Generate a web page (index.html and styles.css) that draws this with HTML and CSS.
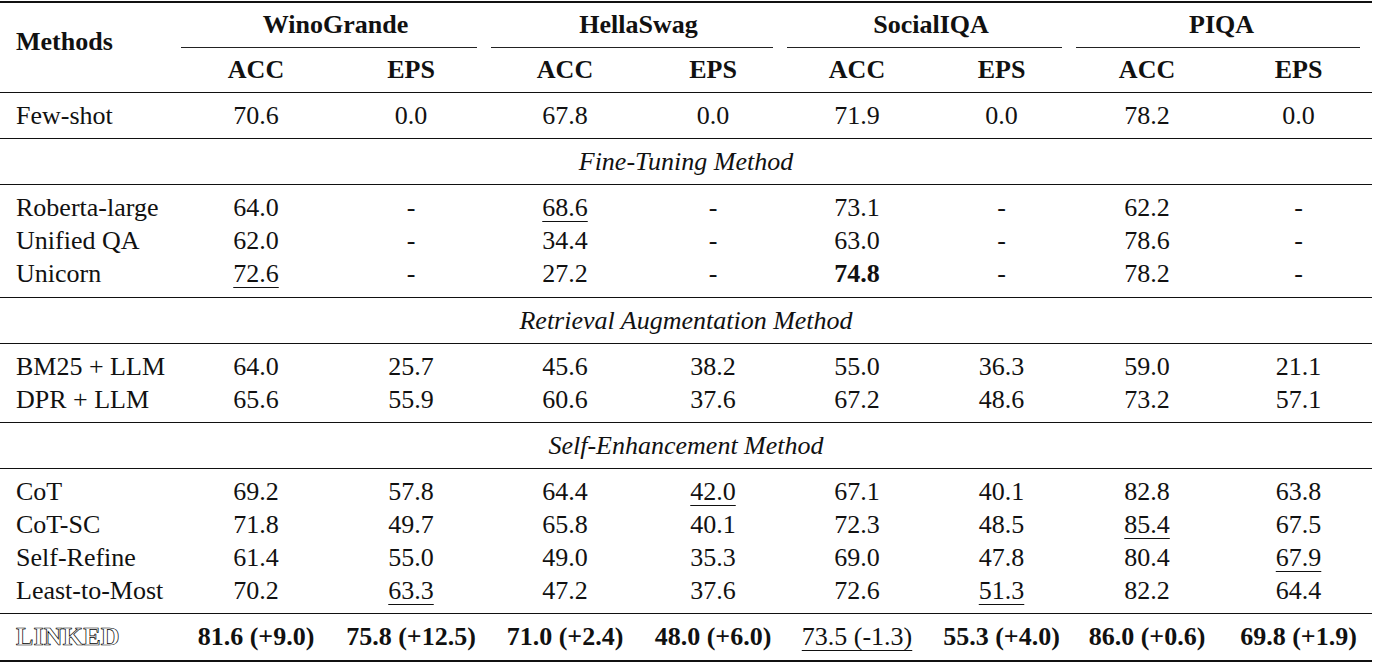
FILE: index.html
```html
<!DOCTYPE html>
<html lang="en">
<head>
<meta charset="utf-8">
<title>Results</title>
<link rel="stylesheet" href="styles.css">
</head>
<body>
<table class="results">
  <colgroup>
    <col class="c-method"><col class="c1"><col class="c2"><col class="c3"><col class="c4"><col class="c5"><col class="c6"><col class="c7"><col class="c8">
  </colgroup>
  <thead>
    <tr class="hrow1">
      <th rowspan="2" class="methods">Methods</th>
      <th colspan="2"><div class="grp">WinoGrande</div></th>
      <th colspan="2"><div class="grp">HellaSwag</div></th>
      <th colspan="2"><div class="grp">SocialIQA</div></th>
      <th colspan="2"><div class="grp grp-last">PIQA</div></th>
    </tr>
    <tr class="hrow2">
      <th>ACC</th><th>EPS</th><th>ACC</th><th>EPS</th><th>ACC</th><th>EPS</th><th>ACC</th><th>EPS</th>
    </tr>
  </thead>
  <tbody>
    <tr><td>Few-shot</td><td>70.6</td><td>0.0</td><td>67.8</td><td>0.0</td><td>71.9</td><td>0.0</td><td>78.2</td><td>0.0</td></tr>
  </tbody>
  <tbody>
    <tr><td colspan="9" class="label">Fine-Tuning Method</td></tr>
  </tbody>
  <tbody>
    <tr><td>Roberta-large</td><td>64.0</td><td>-</td><td><span class="u">68.6</span></td><td>-</td><td>73.1</td><td>-</td><td>62.2</td><td>-</td></tr>
    <tr><td>Unified QA</td><td>62.0</td><td>-</td><td>34.4</td><td>-</td><td>63.0</td><td>-</td><td>78.6</td><td>-</td></tr>
    <tr><td>Unicorn</td><td><span class="u">72.6</span></td><td>-</td><td>27.2</td><td>-</td><td><b>74.8</b></td><td>-</td><td>78.2</td><td>-</td></tr>
  </tbody>
  <tbody>
    <tr><td colspan="9" class="label">Retrieval Augmentation Method</td></tr>
  </tbody>
  <tbody>
    <tr><td>BM25 + LLM</td><td>64.0</td><td>25.7</td><td>45.6</td><td>38.2</td><td>55.0</td><td>36.3</td><td>59.0</td><td>21.1</td></tr>
    <tr><td>DPR + LLM</td><td>65.6</td><td>55.9</td><td>60.6</td><td>37.6</td><td>67.2</td><td>48.6</td><td>73.2</td><td>57.1</td></tr>
  </tbody>
  <tbody>
    <tr><td colspan="9" class="label">Self-Enhancement Method</td></tr>
  </tbody>
  <tbody>
    <tr><td>CoT</td><td>69.2</td><td>57.8</td><td>64.4</td><td><span class="u">42.0</span></td><td>67.1</td><td>40.1</td><td>82.8</td><td>63.8</td></tr>
    <tr><td>CoT-SC</td><td>71.8</td><td>49.7</td><td>65.8</td><td>40.1</td><td>72.3</td><td>48.5</td><td><span class="u">85.4</span></td><td>67.5</td></tr>
    <tr><td>Self-Refine</td><td>61.4</td><td>55.0</td><td>49.0</td><td>35.3</td><td>69.0</td><td>47.8</td><td>80.4</td><td><span class="u">67.9</span></td></tr>
    <tr><td>Least-to-Most</td><td>70.2</td><td><span class="u">63.3</span></td><td>47.2</td><td>37.6</td><td>72.6</td><td><span class="u">51.3</span></td><td>82.2</td><td>64.4</td></tr>
  </tbody>
  <tbody class="final">
    <tr><td><span class="linked">LINKED</span></td><td><b>81.6 (+9.0)</b></td><td><b>75.8 (+12.5)</b></td><td><b>71.0 (+2.4)</b></td><td><b>48.0 (+6.0)</b></td><td><span class="u">73.5 (-1.3)</span></td><td><b>55.3 (+4.0)</b></td><td><b>86.0 (+0.6)</b></td><td><b>69.8 (+1.9)</b></td></tr>
  </tbody>
</table>
</body>
</html>
```

FILE: styles.css
```css
html, body {
  margin: 0;
  padding: 0;
  background: #ffffff;
}

body {
  font-family: "Liberation Serif", "Times New Roman", serif;
  font-size: 26px;
  color: #111;
}

.results {
  margin-top: 1px;
  width: 1372px;
  table-layout: fixed;
  border-collapse: separate;
  border-spacing: 0;
  border-top: 2px solid #111;
  border-bottom: 2px solid #111;
}

.c-method { width: 174px; }
.c1 { width: 164px; }
.c2 { width: 146px; }
.c3 { width: 162px; }
.c4 { width: 134px; }
.c5 { width: 154px; }
.c6 { width: 135px; }
.c7 { width: 156px; }
.c8 { width: 147px; }

th, td {
  padding: 0;
  line-height: 33px;
  text-align: center;
  white-space: nowrap;
  vertical-align: top;
}

th {
  font-weight: bold;
}

.hrow1 th {
  padding-top: 5px;
}

.grp {
  padding-left: 13px;
  padding-bottom: 6px;
  margin: 0 7px;
  border-bottom: 1px solid #222;
}

.grp-last {
  padding-left: 7px;
  margin-right: 12px;
}

.hrow1 th.methods {
  text-align: left;
  padding-left: 16px;
  padding-top: 22px;
  border-bottom: 1px solid #111;
}

.hrow2 th {
  padding-top: 5px;
  padding-bottom: 6px;
  border-bottom: 1px solid #111;
}

td:first-child {
  text-align: left;
  padding-left: 16px;
}

td.label {
  text-align: center;
  padding-left: 0;
  font-style: italic;
}

tbody tr:first-child td {
  padding-top: 6px;
}

tbody tr:last-child td {
  padding-bottom: 6.2px;
  border-bottom: 1px solid #111;
}

tbody.final tr:last-child td {
  border-bottom: none;
}

.u {
  text-decoration: underline;
  text-decoration-thickness: 1px;
  text-underline-offset: 5px;
}

b {
  font-weight: bold;
}

.linked {
  font-weight: bold;
  color: #ffffff;
  -webkit-text-stroke: 0.7px #000;
  letter-spacing: 0.2px;
}
```
